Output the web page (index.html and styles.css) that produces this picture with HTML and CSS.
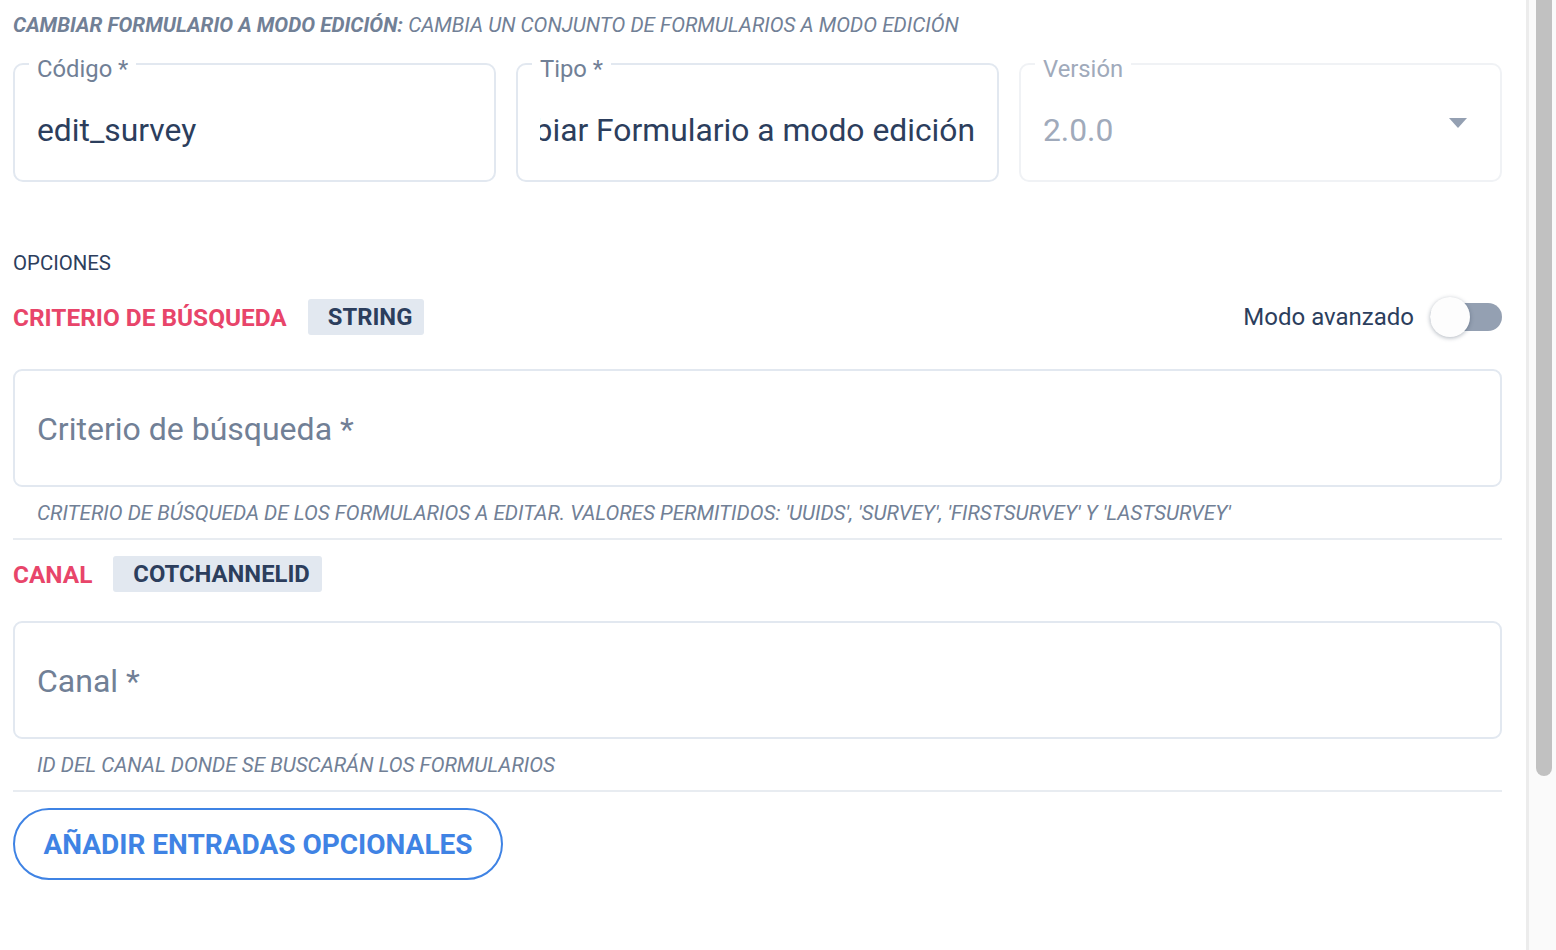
FILE: index.html
```html
<!DOCTYPE html>
<html lang="es">
<head>
<meta charset="utf-8">
<title>Cambiar formulario a modo edición</title>
<link rel="stylesheet" href="styles.css">
</head>
<body>
<div class="page">
  <main class="main">
    <p class="intro"><strong>Cambiar formulario a modo edición:</strong> cambia un conjunto de formularios a modo edición</p>

    <div class="meta-row">
      <fieldset class="box">
        <legend class="box-label">Código *</legend>
        <div class="box-value">edit_survey</div>
      </fieldset>
      <fieldset class="box">
        <legend class="box-label">Tipo *</legend>
        <div class="box-value box-value--scrolled"><span>Cambiar Formulario a modo edición</span></div>
      </fieldset>
      <fieldset class="box box--disabled">
        <legend class="box-label">Versión</legend>
        <div class="box-value">
          <span>2.0.0</span>
          <svg class="caret" width="18" height="10" viewBox="0 0 18 10"><path d="M0 0 H18 L9 10 Z" fill="#94a0b2"/></svg>
        </div>
      </fieldset>
    </div>

    <h3 class="options-title">Opciones</h3>

    <section class="field">
      <div class="field-head">
        <span class="field-name">Criterio de búsqueda</span>
        <span class="badge">STRING</span>
        <div class="advanced">
          <span class="advanced-label">Modo avanzado</span>
          <span class="toggle"><span class="toggle-knob"></span></span>
        </div>
      </div>
      <div class="input"><span class="placeholder">Criterio de búsqueda *</span></div>
      <p class="hint">Criterio de búsqueda de los formularios a editar. Valores permitidos: 'uuids', 'survey', 'firstSurvey' y 'lastSurvey'</p>
    </section>

    <section class="field">
      <div class="field-head">
        <span class="field-name">Canal</span>
        <span class="badge">COTCHANNELID</span>
      </div>
      <div class="input input--tight"><span class="placeholder">Canal *</span></div>
      <p class="hint">ID del canal donde se buscarán los formularios</p>
    </section>

    <button class="add-btn" type="button">Añadir entradas opcionales</button>
  </main>
  <div class="scrollbar"><div class="scrollbar-thumb"></div></div>
</div>
</body>
</html>
```

FILE: styles.css
```css
* { box-sizing: border-box; }

html, body {
  margin: 0;
  padding: 0;
  background: #ffffff;
  font-family: Roboto, "Liberation Sans", Arial, sans-serif;
  color: #2c3e5d;
}

.page {
  display: flex;
  height: 950px;
  overflow: hidden;
}

.main {
  flex: 1;
  padding: 13px 24px 0 13px;
}

.intro {
  margin: 0;
  font-size: 20.7px;
  line-height: 24px;
  font-style: italic;
  text-transform: uppercase;
  color: #718096;
}
.intro strong { font-weight: 700; }

.meta-row {
  display: flex;
  gap: 20px;
  margin-top: 10px;
}

.box {
  flex: 1;
  min-width: 0;
  margin: 0;
  padding: 0 22px 0 22px;
  border: 2px solid #e2e8f0;
  border-radius: 10px;
}

.box-label {
  margin-left: -8px;
  padding: 10px 8px 0 8px;
  font-size: 23.8px;
  line-height: 24px;
  color: #718096;
}

.box-value {
  height: 99px;
  display: flex;
  align-items: center;
  justify-content: space-between;
  font-size: 31.8px;
  color: #2c3e5d;
  white-space: nowrap;
  padding-bottom: 2px;
}

.box-value--scrolled {
  justify-content: flex-end;
  overflow: hidden;
}

.box--disabled { border-color: #f0f2f5; }
.box--disabled .box-label,
.box--disabled .box-value { color: #a0aabb; }

.caret { margin-right: 11px; margin-top: -14px; }

.options-title {
  margin: 70px 0 0;
  font-size: 20.4px;
  line-height: 22px;
  font-weight: 400;
  text-transform: uppercase;
  color: #2c3e5d;
}

.field {
  border-bottom: 2px solid #e8ecf1;
  padding-bottom: 14px;
  margin-top: 16px;
}
.options-title + .field { margin-top: 21px; }

.field-head {
  display: flex;
  align-items: center;
  min-height: 36px;
}

.field-name {
  font-size: 24.4px;
  font-weight: 700;
  text-transform: uppercase;
  color: #e8456a;
}

.badge {
  margin-left: 21px;
  height: 36px;
  padding: 0 12px 0 20px;
  display: inline-flex;
  align-items: center;
  background: #e2e8f0;
  border-radius: 3px;
  font-size: 23.8px;
  font-weight: 700;
  color: #2c3e5d;
}

.advanced {
  margin-left: auto;
  display: flex;
  align-items: center;
  gap: 16px;
  height: 44px;
}

.advanced-label {
  font-size: 24px;
  color: #2c3e5d;
}

.toggle {
  position: relative;
  width: 72px;
  height: 28px;
  border-radius: 14px;
  background: #94a0b2;
}

.toggle-knob {
  position: absolute;
  left: 0;
  top: -6px;
  width: 40px;
  height: 40px;
  border-radius: 50%;
  background: #fdfdfd;
  box-shadow: 0 1px 4px rgba(30, 45, 70, 0.35);
}

.input {
  margin-top: 30px;
  height: 118px;
  border: 2px solid #e2e8f0;
  border-radius: 9px;
  padding: 0 22px;
  display: flex;
  align-items: center;
}
.input--tight { margin-top: 29px; }

.placeholder {
  font-size: 32px;
  color: #718096;
  padding-top: 2px;
}

.hint {
  margin: 15px 0 0;
  padding-left: 24px;
  font-size: 20.7px;
  line-height: 22px;
  font-style: italic;
  text-transform: uppercase;
  color: #718096;
}

.add-btn {
  margin-top: 16px;
  width: 490px;
  height: 72px;
  border: 2px solid #3f83e4;
  border-radius: 36px;
  background: #ffffff;
  color: #3f83e4;
  font-family: Roboto, "Liberation Sans", Arial, sans-serif;
  font-size: 28px;
  font-weight: 700;
  text-transform: uppercase;
  cursor: pointer;
}

.scrollbar {
  width: 30px;
  flex: none;
  background: #fafafa;
  border-left: 3px solid #ececec;
  padding: 0 4px 0 7px;
}

.scrollbar-thumb {
  height: 776px;
  background: #c1c1c1;
  border-radius: 0 0 8px 8px;
}
```
